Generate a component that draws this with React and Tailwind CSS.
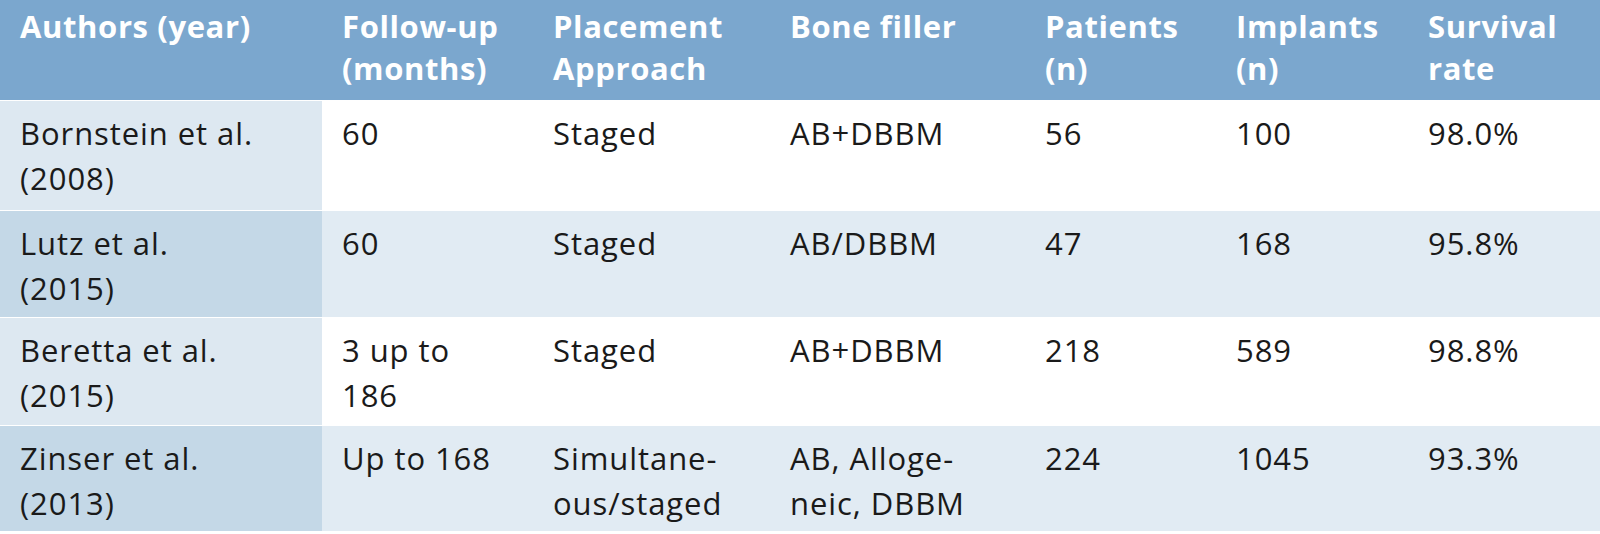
import React from "react";

const cols = "grid grid-cols-[322px_211px_237px_255px_191px_192px_192px]";

const head = [
  ["Authors (year)"],
  ["Follow-up", "(months)"],
  ["Placement", "Approach"],
  ["Bone filler"],
  ["Patients", "(n)"],
  ["Implants", "(n)"],
  ["Survival", "rate"],
];

const rows = [
  {
    h: "h-[109px]",
    alt: false,
    cells: [
      ["Bornstein et al.", "(2008)"],
      ["60"],
      ["Staged"],
      ["AB+DBBM"],
      ["56"],
      ["100"],
      ["98.0%"],
    ],
  },
  {
    h: "h-[106px]",
    alt: true,
    cells: [
      ["Lutz et al.", "(2015)"],
      ["60"],
      ["Staged"],
      ["AB/DBBM"],
      ["47"],
      ["168"],
      ["95.8%"],
    ],
  },
  {
    h: "h-[107px]",
    alt: false,
    cells: [
      ["Beretta et al.", "(2015)"],
      ["3 up to", "186"],
      ["Staged"],
      ["AB+DBBM"],
      ["218"],
      ["589"],
      ["98.8%"],
    ],
  },
  {
    h: "h-[105px]",
    alt: true,
    cells: [
      ["Zinser et al.", "(2013)"],
      ["Up to 168"],
      ["Simultane-", "ous/staged"],
      ["AB, Alloge-", "neic, DBBM"],
      ["224"],
      ["1045"],
      ["93.3%"],
    ],
  },
];

function Lines({ lines }) {
  return lines.map((l, i) => <div key={i} className="whitespace-nowrap">{l}</div>);
}

export default function App() {
  return (
    <div className="w-[1600px] h-[534px] bg-white font-['Open_Sans',sans-serif] text-[31px] overflow-hidden">
      <div className="flex flex-col gap-[1px]">
        {/* header */}
        <div className={`${cols} h-[100px] bg-[#7ba7ce] text-white font-bold leading-[42px] tracking-[0.02em]`}>
          {head.map((c, i) => (
            <div key={i} className="px-5 pt-[5px]">
              <Lines lines={c} />
            </div>
          ))}
        </div>

        {rows.map((r, ri) => (
          <div key={ri} className={`${cols} ${r.h} text-[#1a1a1a] leading-[45px] tracking-[0.03em]`}>
            {r.cells.map((c, ci) => (
              <div
                key={ci}
                className={`px-5 pt-[10px] ${
                  ci === 0
                    ? r.alt
                      ? "bg-[#c4d8e7]"
                      : "bg-[#dde8f1]"
                    : r.alt
                    ? "bg-[#e1ebf3]"
                    : "bg-white"
                }`}
              >
                <Lines lines={c} />
              </div>
            ))}
          </div>
        ))}
      </div>
    </div>
  );
}
